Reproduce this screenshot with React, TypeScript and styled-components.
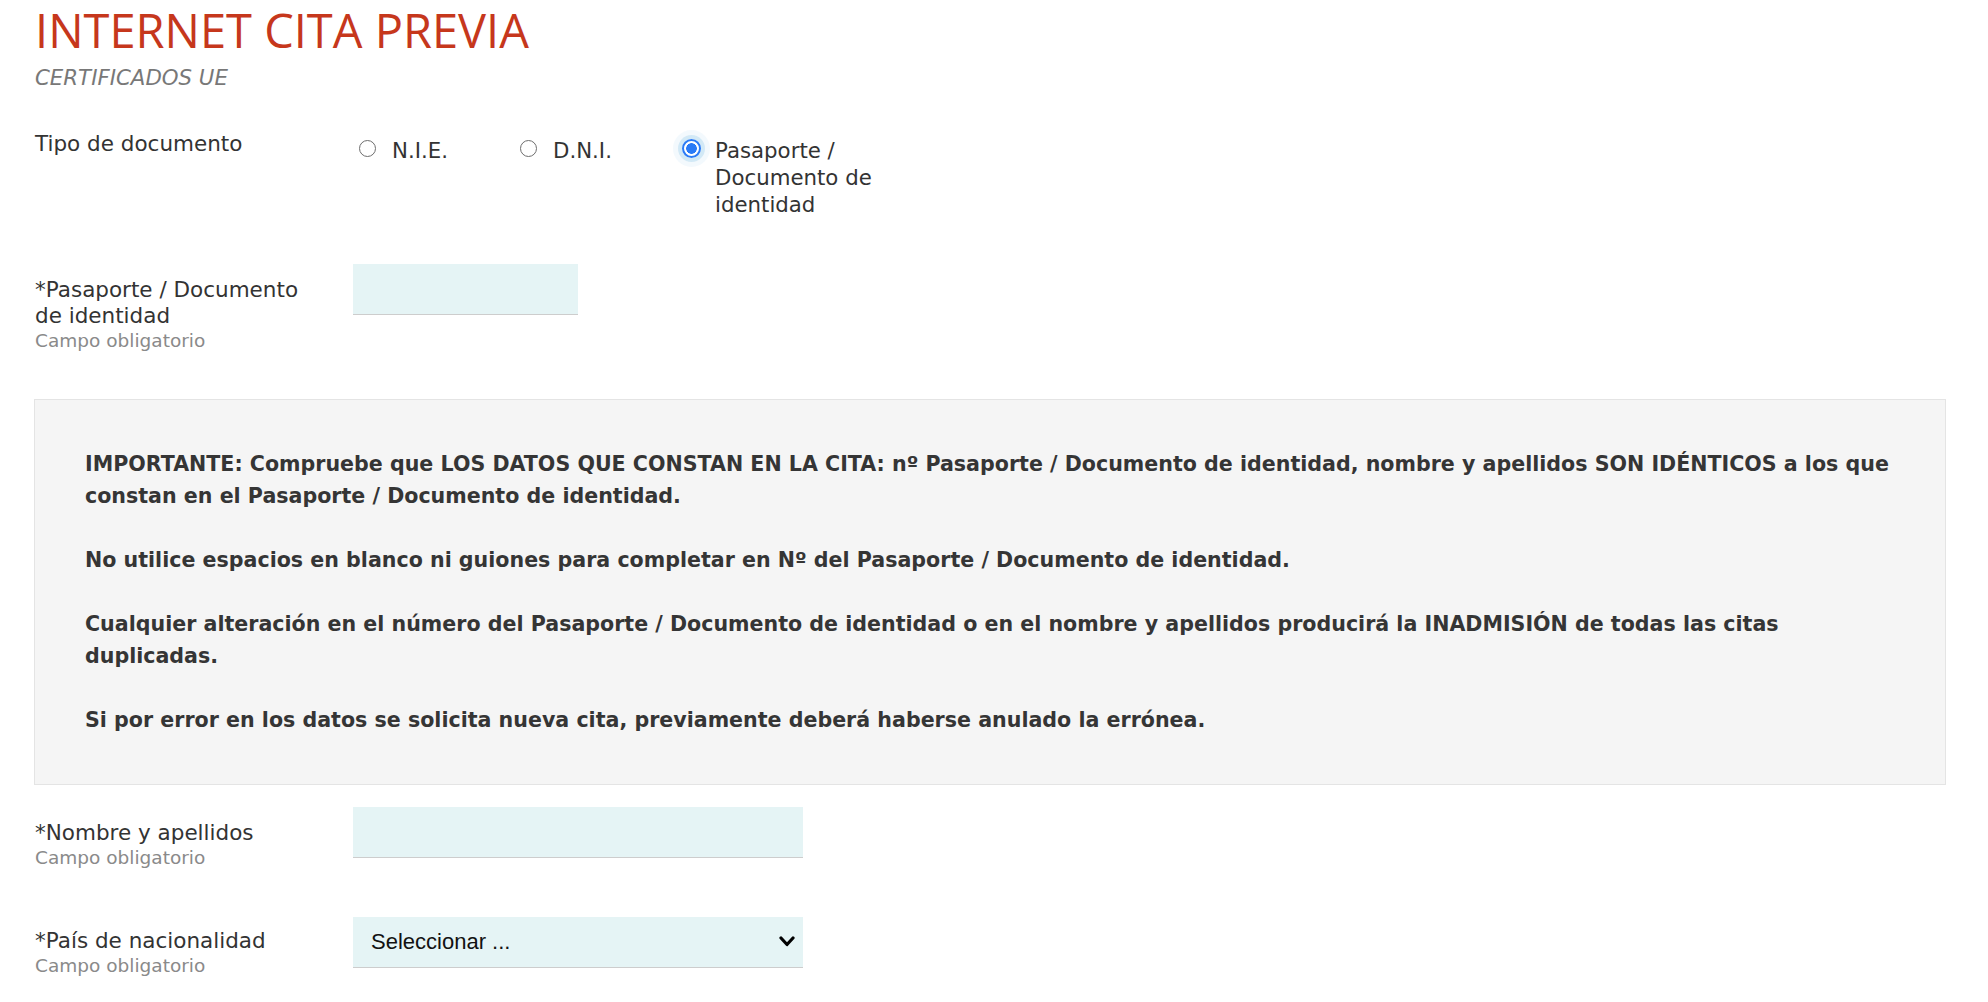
import React from 'react';
import styled, { createGlobalStyle } from 'styled-components';

const GlobalStyle = createGlobalStyle`
  html, body {
    margin: 0;
    padding: 0;
    background: #fff;
  }
  body {
    font-family: "DejaVu Sans", "Open Sans", sans-serif;
    color: #333;
  }
`;

const Page = styled.main`
  padding: 2px 42px 0 35px;
`;

const Title = styled.h1`
  margin: 0;
  font-family: "Open Sans", "Noto Sans", sans-serif;
  font-weight: 400;
  font-size: 47px;
  line-height: 56px;
  color: #c6371c;
`;

const Subtitle = styled.h2`
  margin: 7px 0 0;
  font-weight: 400;
  font-style: italic;
  font-size: 21.3px;
  line-height: 26.7px;
  color: #787878;
`;

const Row = styled.div<{ $gap: number }>`
  display: grid;
  grid-template-columns: 318px 1fr;
  align-items: start;
  margin-top: ${(p) => p.$gap}px;
`;

const LabelCell = styled.div<{ $pad?: number }>`
  padding-top: ${(p) => p.$pad ?? 13}px;
  padding-right: 30px;
`;

const LabelText = styled.div`
  font-size: 21.5px;
  line-height: 26.7px;
  color: #333;
`;

const Hint = styled.div`
  font-size: 18.5px;
  line-height: 22px;
  color: #8a8a8a;
`;

const Options = styled.div`
  display: flex;
  align-items: flex-start;
  padding-left: 6px;
  padding-top: 6px;
`;

const Option = styled.label<{ $width?: number; $gap?: number }>`
  display: flex;
  align-items: flex-start;
  gap: ${(p) => p.$gap ?? 16}px;
  width: ${(p) => (p.$width ? `${p.$width}px` : 'auto')};
  cursor: pointer;
`;

const Radio = styled.span<{ $checked?: boolean }>`
  flex: 0 0 auto;
  box-sizing: border-box;
  width: ${(p) => (p.$checked ? 19 : 17)}px;
  height: ${(p) => (p.$checked ? 19 : 17)}px;
  margin-top: ${(p) => (p.$checked ? 2 : 3)}px;
  border-radius: 50%;
  border: ${(p) => (p.$checked ? '2.5px solid #2a7bf6' : '1.5px solid #6e6e6e')};
  background: ${(p) => (p.$checked ? 'radial-gradient(circle, #2a7bf6 0 5px, #fff 5.6px)' : '#fff')};
  box-shadow: ${(p) =>
    p.$checked ? '0 0 0 4px rgba(170, 212, 238, 0.45), 0 0 0 9px rgba(170, 212, 238, 0.14)' : 'none'};
`;

const OptionText = styled.span`
  font-size: 21.3px;
  line-height: 27px;
  color: #333;
  max-width: 190px;
`;

const TextInput = styled.input<{ $width: number }>`
  box-sizing: border-box;
  width: ${(p) => p.$width}px;
  height: 51px;
  margin: 0;
  padding: 0 18px;
  border: none;
  border-bottom: 1px solid #cdcdcd;
  background: #e5f4f5;
  font: inherit;
  outline: none;
`;

const SelectBox = styled.div`
  box-sizing: border-box;
  width: 450px;
  height: 51px;
  padding: 0 8px 0 18px;
  display: flex;
  align-items: center;
  justify-content: space-between;
  background: #e5f4f5;
  border-bottom: 1px solid #cdcdcd;
  font-family: "Liberation Sans", Arial, sans-serif;
  font-size: 22px;
  color: #111;
`;

const Notice = styled.section`
  margin: 47px 0 0 -1px;
  padding: 48px 50px 48px;
  background: #f5f5f5;
  border: 1px solid #e4e4e4;
`;

const NoticePara = styled.p`
  margin: 0 0 32px;
  font-weight: 700;
  font-size: 20.6px;
  line-height: 32px;
  color: #353535;
  &:last-child {
    margin-bottom: 0;
  }
`;

const Chevron = () => (
  <svg width="16" height="11" viewBox="0 0 16 11" aria-hidden="true">
    <polyline points="2,2 8,8.5 14,2" fill="none" stroke="#000" strokeWidth="3.2" strokeLinecap="round" strokeLinejoin="round" />
  </svg>
);

const App = () => (
  <Page>
    <GlobalStyle />
    <Title>INTERNET CITA PREVIA</Title>
    <Subtitle>CERTIFICADOS UE</Subtitle>

    <Row $gap={39}>
      <LabelCell $pad={0}>
        <LabelText>Tipo de documento</LabelText>
      </LabelCell>
      <Options>
        <Option $width={161}>
          <Radio />
          <OptionText>N.I.E.</OptionText>
        </Option>
        <Option $width={162}>
          <Radio />
          <OptionText>D.N.I.</OptionText>
        </Option>
        <Option $gap={14}>
          <Radio $checked />
          <OptionText>Pasaporte / Documento de identidad</OptionText>
        </Option>
      </Options>
    </Row>

    <Row $gap={46}>
      <LabelCell>
        <LabelText>*Pasaporte / Documento de identidad</LabelText>
        <Hint>Campo obligatorio</Hint>
      </LabelCell>
      <div>
        <TextInput $width={225} />
      </div>
    </Row>

    <Notice>
      <NoticePara>
        IMPORTANTE: Compruebe que LOS DATOS QUE CONSTAN EN LA CITA: nº Pasaporte / Documento de identidad, nombre y
        apellidos SON IDÉNTICOS a los que constan en el Pasaporte / Documento de identidad.
      </NoticePara>
      <NoticePara>No utilice espacios en blanco ni guiones para completar en Nº del Pasaporte / Documento de identidad.</NoticePara>
      <NoticePara>
        Cualquier alteración en el número del Pasaporte / Documento de identidad o en el nombre y apellidos producirá la
        INADMISIÓN de todas las citas duplicadas.
      </NoticePara>
      <NoticePara>Si por error en los datos se solicita nueva cita, previamente deberá haberse anulado la errónea.</NoticePara>
    </Notice>

    <Row $gap={22}>
      <LabelCell>
        <LabelText>*Nombre y apellidos</LabelText>
        <Hint>Campo obligatorio</Hint>
      </LabelCell>
      <div>
        <TextInput $width={450} />
      </div>
    </Row>

    <Row $gap={48}>
      <LabelCell $pad={11}>
        <LabelText>*País de nacionalidad</LabelText>
        <Hint>Campo obligatorio</Hint>
      </LabelCell>
      <div>
        <SelectBox>
          <span>Seleccionar ...</span>
          <Chevron />
        </SelectBox>
      </div>
    </Row>
  </Page>
);

export default App;
